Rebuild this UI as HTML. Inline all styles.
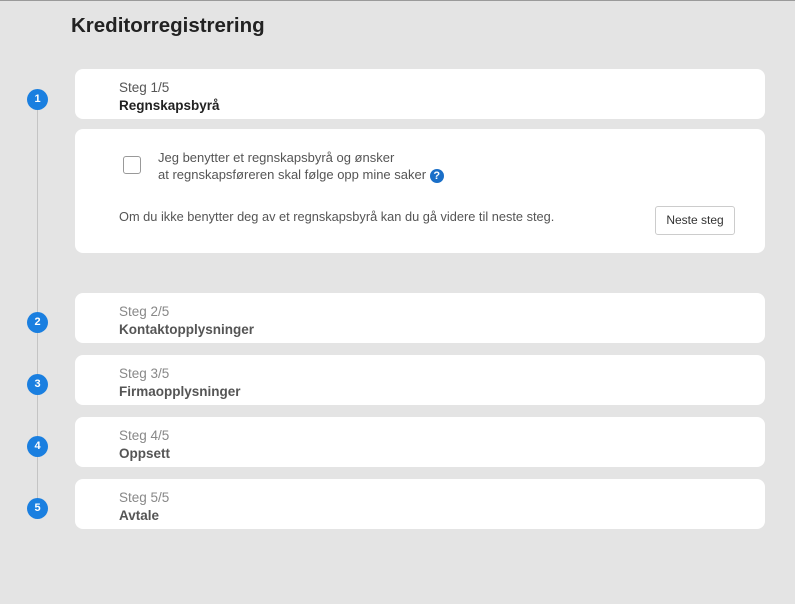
<!DOCTYPE html>
<html><head><meta charset="utf-8"><style>
*{margin:0;padding:0;box-sizing:border-box}
body{width:795px;height:604px;background:#e4e4e4;font-family:"Liberation Sans",Arial,sans-serif;position:relative;overflow:hidden;border-top:1px solid #9a9a9a}
h1{position:absolute;left:71px;top:13px;font-size:20.5px;font-weight:bold;color:#222}
.card{position:absolute;left:75px;width:690px;background:#fff;border-radius:8px}
.step .s{position:absolute;left:44px;top:11px;font-size:13.5px;color:#888}
.step .t{position:absolute;left:44px;top:29px;font-size:13.5px;font-weight:bold;color:#555}
.c{position:absolute;left:27px;width:21px;height:21px;border-radius:50%;background:#1a7fe0;color:#fff;font-size:11px;font-weight:bold;text-align:center;line-height:21px}
.line{position:absolute;left:37px;width:1px;background:#c4c4c4}
</style></head><body>
<h1>Kreditorregistrering</h1>
<div class="line" style="top:108px;height:400px"></div>
<div class="c" style="top:88px">1</div>
<div class="c" style="top:311px">2</div>
<div class="c" style="top:373px">3</div>
<div class="c" style="top:435px">4</div>
<div class="c" style="top:497px">5</div>

<div class="card step" style="top:68px;height:50px"><div class="s" style="color:#555">Steg 1/5</div><div class="t" style="color:#222">Regnskapsbyrå</div></div>
<div class="card" style="top:128px;height:124px">
 <div style="position:absolute;left:48px;top:27px;width:18px;height:18px;border:1.5px solid #999;border-radius:3px"></div>
 <div style="position:absolute;left:83px;top:20px;font-size:13px;color:#555;line-height:17px">Jeg benytter et regnskapsbyrå og ønsker<br>at regnskapsføreren skal følge opp mine saker <span style="display:inline-block;width:14px;height:14px;border-radius:50%;background:#1a6fc8;color:#fff;font-size:11px;font-weight:bold;text-align:center;line-height:14px;vertical-align:0">?</span></div>
 <div style="position:absolute;left:44px;top:80px;font-size:12.8px;color:#555">Om du ikke benytter deg av et regnskapsbyrå kan du gå videre til neste steg.</div>
 <div style="position:absolute;left:580px;top:77px;width:80px;height:29px;border:1px solid #ccc;border-radius:3px;font-size:12px;color:#333;text-align:center;line-height:27px">Neste steg</div>
</div>
<div class="card step" style="top:292px;height:50px"><div class="s">Steg 2/5</div><div class="t">Kontaktopplysninger</div></div>
<div class="card step" style="top:354px;height:50px"><div class="s">Steg 3/5</div><div class="t">Firmaopplysninger</div></div>
<div class="card step" style="top:416px;height:50px"><div class="s">Steg 4/5</div><div class="t">Oppsett</div></div>
<div class="card step" style="top:478px;height:50px"><div class="s">Steg 5/5</div><div class="t">Avtale</div></div>
</body></html>
